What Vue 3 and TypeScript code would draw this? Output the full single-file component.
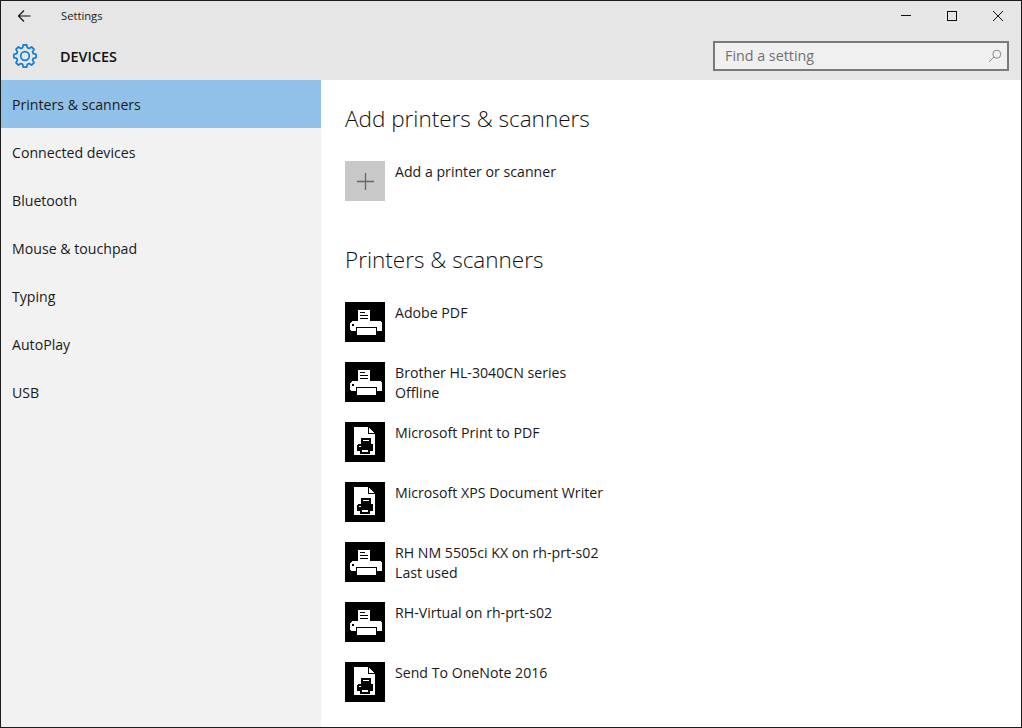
<script setup lang="ts">
interface Device { name: string; sub?: string; kind: 'printer' | 'doc' }
const nav: string[] = ['Printers & scanners', 'Connected devices', 'Bluetooth', 'Mouse & touchpad', 'Typing', 'AutoPlay', 'USB']
const devices: Device[] = [
  { name: 'Adobe PDF', kind: 'printer' },
  { name: 'Brother HL-3040CN series', sub: 'Offline', kind: 'printer' },
  { name: 'Microsoft Print to PDF', kind: 'doc' },
  { name: 'Microsoft XPS Document Writer', kind: 'doc' },
  { name: 'RH NM 5505ci KX on rh-prt-s02', sub: 'Last used', kind: 'printer' },
  { name: 'RH-Virtual on rh-prt-s02', kind: 'printer' },
  { name: 'Send To OneNote 2016', kind: 'doc' },
]
function gearPath(): string {
  const cx = 12, cy = 12, outer = 11.2, root = 8.6, teeth = 8
  const step = (Math.PI * 2) / teeth
  const pts: string[] = []
  for (let i = 0; i < teeth; i++) {
    const a = i * step - Math.PI / 2
    const at = (r: number, d: number) => `${(cx + r * Math.cos(a + d)).toFixed(2)} ${(cy + r * Math.sin(a + d)).toFixed(2)}`
    pts.push(at(root, -step * 0.36), at(outer, -step * 0.2), at(outer, step * 0.2), at(root, step * 0.36))
  }
  return 'M' + pts.join('L') + 'Z'
}
const gear = gearPath()
</script>

<template>
  <div class="window">
    <header class="header">
      <div class="titlebar">
        <svg class="back" width="16" height="14" viewBox="0 0 16 14" fill="none" stroke="#111" stroke-width="1.2">
          <path d="M13.5 7H1.5M7 1.5 1.5 7 7 12.5" />
        </svg>
        <span class="title">Settings</span>
        <div class="controls">
          <svg width="12" height="12" viewBox="0 0 12 12" stroke="#111" fill="none"><path d="M1 5.500h10" /></svg>
          <svg width="12" height="12" viewBox="0 0 12 12" stroke="#111" fill="none"><rect x="1.5" y="1.5" width="9" height="9" /></svg>
          <svg width="12" height="12" viewBox="0 0 12 12" stroke="#111" fill="none"><path d="M1 1l10 10M11 1 1 11" /></svg>
        </div>
      </div>
      <div class="subbar">
        <svg class="gear" width="24" height="24" viewBox="0 0 24 24" fill="none" stroke="#0f7dd8" stroke-width="1.7" stroke-linejoin="round">
          <circle cx="12" cy="12" r="4.3" />
          <path :d="gear" />
        </svg>
        <span class="section">DEVICES</span>
        <div class="search">
          <span>Find a setting</span>
          <svg width="14" height="14" viewBox="0 0 14 14" fill="none" stroke="#8a8a8a"><circle cx="8.8" cy="5.2" r="4" /><path d="M5.8 8 1 13" /></svg>
        </div>
      </div>
    </header>
    <div class="body">
      <nav class="sidebar">
        <div v-for="(item, i) in nav" :key="item" class="nav-item" :class="{ active: i === 0 }">{{ item }}</div>
      </nav>
      <main class="main">
        <h2 class="heading first">Add printers &amp; scanners</h2>
        <div class="row add">
          <div class="plus">
            <svg width="17" height="17" viewBox="0 0 17 17" stroke="#666" stroke-width="1.3"><path d="M0 8.500h17M8.500 0v17" /></svg>
          </div>
          <div class="label">Add a printer or scanner</div>
        </div>
        <h2 class="heading second">Printers &amp; scanners</h2>
        <div v-for="d in devices" :key="d.name" class="row">
          <svg class="dev" width="40" height="40" viewBox="0 0 40 40" shape-rendering="crispEdges">
            <rect width="40" height="40" fill="#000" />
            <g v-if="d.kind === 'printer'">
              <rect x="13" y="8" width="12" height="12" fill="#fff" />
              <path d="M15 10h5v1h-5zM15 13h8v1h-8zM15 16h8v1h-8z" fill="#000" />
              <path d="M7 19h28l2 2v7l-1 1H6l-1-1v-7z" fill="#fff" />
              <rect x="7" y="22" width="2" height="2" fill="#000" />
              <rect x="11" y="25" width="21" height="9" fill="#000" />
              <rect x="12" y="26" width="19" height="7" fill="#fff" />
            </g>
            <g v-else>
              <path d="M9 5h14l7 7v21H9z" fill="#fff" />
              <path d="M23 5h1v6h6v1h-7z" fill="#000" />
              <path d="M16 16h10v6H16z" fill="#000" />
              <path d="M18 18h6v1h-6z" fill="#fff" />
              <path d="M13 22h14l1 1v6H12v-6z" fill="#000" />
              <rect x="14" y="24" width="2" height="1" fill="#fff" />
              <path d="M15 27h10v5H15z" fill="#000" />
              <path d="M17 28h6v2h-6z" fill="#fff" />
            </g>
          </svg>
          <div class="label">
            <div>{{ d.name }}</div>
            <div v-if="d.sub">{{ d.sub }}</div>
          </div>
        </div>
      </main>
    </div>
  </div>
</template>

<style>
html, body { margin: 0; background: #fff; }
</style>

<style scoped>
.window {
  box-sizing: border-box;
  width: 1022px;
  height: 728px;
  border: 1px solid #1c1c1c;
  display: flex;
  flex-direction: column;
  overflow: hidden;
  font-family: "Open Sans", "Noto Sans", sans-serif;
  font-size: 14.15px;
  color: #1a1a1a;
  background: #fff;
}
.header { background: #e6e6e6; height: 79px; flex: none; }
.titlebar { height: 29px; display: flex; align-items: center; position: relative; }
.back { margin-left: 16px; }
.title { margin-left: 28px; font-size: 11.2px; }
.controls { margin-left: auto; display: flex; gap: 34px; padding-right: 17px; }
.subbar { height: 48px; padding-top: 2px; display: flex; align-items: center; }
.gear { margin-left: 12px; }
.section { margin-left: 23px; font-size: 14.4px; font-weight: 600; color: #111; }
.search {
  margin-left: auto;
  margin-right: 12px;
  box-sizing: border-box;
  width: 296px;
  height: 30px;
  border: 2px solid #7a7a7a;
  background: #f0f0f0;
  display: flex;
  align-items: center;
  justify-content: space-between;
  padding: 0 5px 0 10px;
  color: #707070;
  font-size: 14.3px;
}
.search span { margin-top: -2px; }
.body { flex: 1; display: flex; min-height: 0; }
.sidebar { width: 320px; background: #f2f2f2; flex: none; }
.nav-item { height: 48px; line-height: 50px; padding-left: 11px; }
.nav-item.active { background: #91c1e8; }
.main { flex: 1; padding-left: 24px; }
.heading { margin: 0; font-weight: 300; font-size: 22.5px; line-height: 28px; color: #111; }
.heading.first { margin-top: 25px; margin-bottom: 28px; }
.heading.second { margin-top: 45px; margin-bottom: 28px; }
.row { display: flex; gap: 10px; height: 60px; line-height: 20px; }
.row.add { height: 40px; }
.plus { width: 40px; height: 40px; background: #c8c8c8; display: flex; align-items: center; justify-content: center; }
.dev { flex: none; display: block; }
.label { margin-top: 1px; }
</style>
